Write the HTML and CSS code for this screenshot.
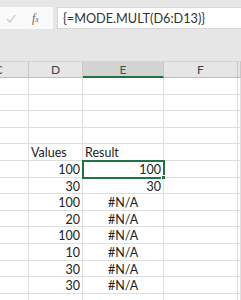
FILE: index.html
```html
<!DOCTYPE html>
<html lang="en">

<head>
    <link rel="stylesheet" href="styles.css">
</head>

<body>
    <div class="window">
        <div class="formula-row">
            <div class="formula-tools">
                <svg class="check-icon" width="10" height="9" viewBox="0 0 10 9">
                    <polyline points="1,5 4,8 9,1" fill="none" stroke="#c4c4c4" stroke-width="1.2" />
                </svg>
                <span class="fx-icon">f<sub>x</sub></span>
            </div>
            <div class="formula-box">{=MODE.MULT(D6:D13)}</div>
        </div>

        <div class="sheet">
            <div class="col-head cut">C</div>
            <div class="col-head">D</div>
            <div class="col-head selected">E</div>
            <div class="col-head">F</div>
            <div class="col-head"></div>

            <div class="cell"></div><div class="cell"></div><div class="cell"></div><div class="cell"></div><div class="cell"></div>
            <div class="cell"></div><div class="cell"></div><div class="cell"></div><div class="cell"></div><div class="cell"></div>
            <div class="cell"></div><div class="cell"></div><div class="cell"></div><div class="cell"></div><div class="cell"></div>
            <div class="cell"></div><div class="cell"></div><div class="cell"></div><div class="cell"></div><div class="cell"></div>

            <div class="cell"></div><div class="cell text">Values</div><div class="cell text">Result</div><div class="cell"></div><div class="cell"></div>
            <div class="cell"></div><div class="cell num">100</div><div class="cell num active">100</div><div class="cell"></div><div class="cell"></div>
            <div class="cell"></div><div class="cell num">30</div><div class="cell num">30</div><div class="cell"></div><div class="cell"></div>
            <div class="cell"></div><div class="cell num">100</div><div class="cell err">#N/A</div><div class="cell"></div><div class="cell"></div>
            <div class="cell"></div><div class="cell num">20</div><div class="cell err">#N/A</div><div class="cell"></div><div class="cell"></div>
            <div class="cell"></div><div class="cell num">100</div><div class="cell err">#N/A</div><div class="cell"></div><div class="cell"></div>
            <div class="cell"></div><div class="cell num">10</div><div class="cell err">#N/A</div><div class="cell"></div><div class="cell"></div>
            <div class="cell"></div><div class="cell num">30</div><div class="cell err">#N/A</div><div class="cell"></div><div class="cell"></div>
            <div class="cell"></div><div class="cell num">30</div><div class="cell err">#N/A</div><div class="cell"></div><div class="cell"></div>
            <div class="cell"></div><div class="cell"></div><div class="cell"></div><div class="cell"></div><div class="cell"></div>
        </div>
    </div>
</body>

</html>
```

FILE: styles.css
```css
body {
    margin: 0;
    padding: 0;
    background-color: #e6e6e6;
    font-family: Lato, "Liberation Sans", sans-serif;
    overflow: hidden;
}

.window {
    width: 241px;
    height: 300px;
    overflow: hidden;
    padding-top: 7px;
    box-sizing: border-box;
}

.formula-row {
    display: flex;
    height: 22px;
    gap: 4px;
}

.formula-tools {
    width: 53px;
    background-color: #fafafa;
    display: flex;
    align-items: center;
    padding-left: 6px;
    box-sizing: border-box;
}

.check-icon {
    margin-top: 1px;
}

.fx-icon {
    font-family: "Liberation Serif", serif;
    font-style: italic;
    font-size: 12px;
    color: #666;
    margin-left: 16px;
}

.fx-icon sub {
    font-size: 8px;
    vertical-align: baseline;
}

.formula-box {
    flex: 1;
    background-color: #fff;
    border: 1px solid #d6d6d6;
    border-right: none;
    color: #333;
    font-size: 12.7px;
    line-height: 20px;
    padding-left: 5px;
}

.sheet {
    margin-top: 32px;
    display: grid;
    grid-template-columns: 29px 54px 81px 74px 1fr;
    grid-template-rows: 17px;
    grid-auto-rows: 16.6px;
    background-color: #fff;
}

.col-head {
    background-color: #e6e6e6;
    border-top: 1px solid #d4d4d4;
    border-right: 1px solid #c8c8c8;
    border-bottom: 1px solid #bdbdbd;
    color: #444;
    font-size: 12px;
    line-height: 15px;
    text-align: center;
}

.col-head.cut {
    text-indent: -31px;
}

.col-head.selected {
    background-color: #d3d3d3;
    border-bottom: 2px solid #217346;
    color: #3d5a48;
}

.cell {
    border-right: 1px solid #dedede;
    border-bottom: 1px solid #dedede;
    color: #222;
    font-size: 12.5px;
    line-height: 18px;
    white-space: nowrap;
    overflow: visible;
}

.text {
    padding-left: 2px;
}

.num {
    text-align: right;
    padding-right: 2px;
}

.err {
    text-align: center;
}

.active {
    position: relative;
    outline: 2px solid #217346;
    outline-offset: -1px;
}

.active::after {
    content: "";
    position: absolute;
    right: -3px;
    bottom: -3px;
    width: 5px;
    height: 5px;
    background-color: #217346;
    border: 1px solid #fff;
    box-sizing: border-box;
}
```
